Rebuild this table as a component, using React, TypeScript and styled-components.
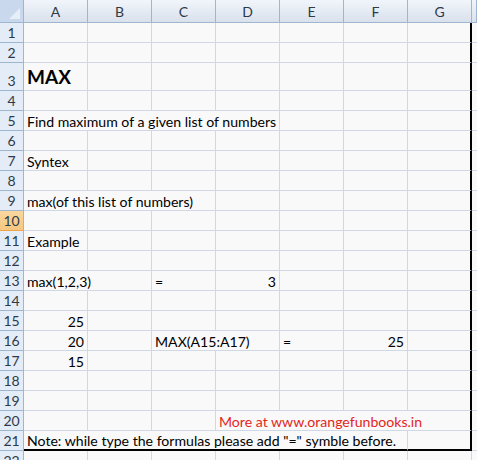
import React from "react";
import styled, { createGlobalStyle, css } from "styled-components";

const GlobalStyle = createGlobalStyle`
  html, body {
    margin: 0;
    padding: 0;
    background: #f9f9f9;
    overflow: hidden;
  }
  body {
    font-family: Lato, "Liberation Sans", Arial, sans-serif;
  }
`;

const GRID = "#d0d7e5";
const HEAD_BORDER = "#9eb6ce";

const Sheet = styled.div`
  display: grid;
  grid-template-columns: 24px repeat(7, 64px) 1fr;
  grid-template-rows: 23px 20px 20px 28px repeat(19, 20px);
  width: 477px;
  height: 460px;
  overflow: hidden;
  background: #f9f9f9;
  font-family: Lato, "Liberation Sans", Arial, sans-serif;
`;

const Corner = styled.div`
  box-sizing: border-box;
  background: #c9d8ec;
  border-right: 1px solid ${HEAD_BORDER};
  border-bottom: 1px solid ${HEAD_BORDER};
  position: relative;
  &::after {
    content: "";
    position: absolute;
    right: 3px;
    bottom: 3px;
    width: 0;
    height: 0;
    border-left: 11px solid transparent;
    border-bottom: 11px solid #e6eef8;
  }
`;

const ColHeader = styled.div`
  box-sizing: border-box;
  background: linear-gradient(to bottom, #f1f5fb 0%, #e4eaf3 55%, #d9e1ec 100%);
  border-right: 1px solid ${HEAD_BORDER};
  border-bottom: 1px solid ${HEAD_BORDER};
  display: flex;
  align-items: center;
  justify-content: center;
  font-size: 14px;
  color: #2f3a48;
  padding-top: 1px;
`;

const RowHeader = styled.div<{ $active?: boolean }>`
  box-sizing: border-box;
  background: ${(p) =>
    p.$active
      ? "linear-gradient(to bottom, #f9d7a0 0%, #f6c77f 100%)"
      : "#e4ecf7"};
  border-right: 1px solid ${(p) => (p.$active ? "#f2a64a" : HEAD_BORDER)};
  border-bottom: 1px solid ${(p) => (p.$active ? "#f2a64a" : HEAD_BORDER)};
  display: flex;
  align-items: flex-end;
  justify-content: center;
  font-size: 14px;
  line-height: 16px;
  padding-bottom: 1px;
  color: #2f3a48;
`;

type Align = "left" | "right";

const Cell = styled.div<{
  $span: number;
  $align: Align;
  $thickRight?: boolean;
  $thickBottom?: boolean;
  $bold?: boolean;
  $big?: boolean;
  $red?: boolean;
}>`
  box-sizing: border-box;
  grid-column: span ${(p) => p.$span};
  border-right: ${(p) => (p.$thickRight ? "2px solid #000" : `1px solid ${GRID}`)};
  border-bottom: ${(p) => (p.$thickBottom ? "2px solid #000" : `1px solid ${GRID}`)};
  display: flex;
  align-items: flex-end;
  justify-content: ${(p) => (p.$align === "right" ? "flex-end" : "flex-start")};
  padding: 0 3px 0 3px;
  white-space: nowrap;
  overflow: hidden;
  font-size: 14.1px;
  line-height: 16px;
  color: ${(p) => (p.$red ? "#e3261c" : "#000")};
  ${(p) =>
    p.$bold &&
    css`
      font-weight: 700;
    `}
  ${(p) =>
    p.$big &&
    css`
      font-size: 19px;
      line-height: 24px;
      padding-bottom: 1px;
    `}
`;

const Filler = styled.div`
  box-sizing: border-box;
  border-bottom: 1px solid ${GRID};
`;

type Item = {
  span?: number;
  text?: string;
  align?: Align;
  bold?: boolean;
  big?: boolean;
  red?: boolean;
};

const rows: Record<number, Item[]> = {
  3: [{ text: "MAX", bold: true, big: true }],
  5: [{ span: 4, text: "Find maximum of a given list of numbers" }],
  7: [{ text: "Syntex" }],
  9: [{ span: 3, text: "max(of this list of numbers)" }],
  11: [{ text: "Example" }],
  13: [{ span: 2, text: "max(1,2,3)" }, { text: "=" }, { text: "3", align: "right" }],
  15: [{ text: "25", align: "right" }],
  16: [
    { text: "20", align: "right" },
    {},
    { span: 2, text: "MAX(A15:A17)" },
    { text: "=" },
    { text: "25", align: "right" },
  ],
  17: [{ text: "15", align: "right" }],
  20: [{}, {}, {}, { span: 4, text: "More at www.orangefunbooks.in", red: true }],
  21: [{ span: 6, text: "Note: while type the formulas please add \"=\" symble before." }],
};

const COLS = ["A", "B", "C", "D", "E", "F", "G"];

function buildRow(n: number) {
  const items = [...(rows[n] || [])];
  let used = items.reduce((s, it) => s + (it.span || 1), 0);
  while (used < 7) {
    items.push({});
    used += 1;
  }
  let col = 0;
  return items.map((it, i) => {
    const span = it.span || 1;
    col += span;
    const lastCol = col === 7;
    const inBox = n <= 21;
    return (
      <Cell
        key={`${n}-${i}`}
        $span={span}
        $align={it.align || "left"}
        $thickRight={inBox && lastCol}
        $thickBottom={n === 21}
        $bold={it.bold}
        $big={it.big}
        $red={it.red}
      >
        {it.text}
      </Cell>
    );
  });
}

export default function App() {
  const rowNums = Array.from({ length: 22 }, (_, i) => i + 1);
  return (
    <>
      <GlobalStyle />
      <Sheet>
        <Corner />
        {COLS.map((c) => (
          <ColHeader key={c}>{c}</ColHeader>
        ))}
        <ColHeader />
        {rowNums.map((n) => (
          <React.Fragment key={n}>
            <RowHeader $active={n === 10}>{n}</RowHeader>
            {buildRow(n)}
            <Filler />
          </React.Fragment>
        ))}
      </Sheet>
    </>
  );
}
